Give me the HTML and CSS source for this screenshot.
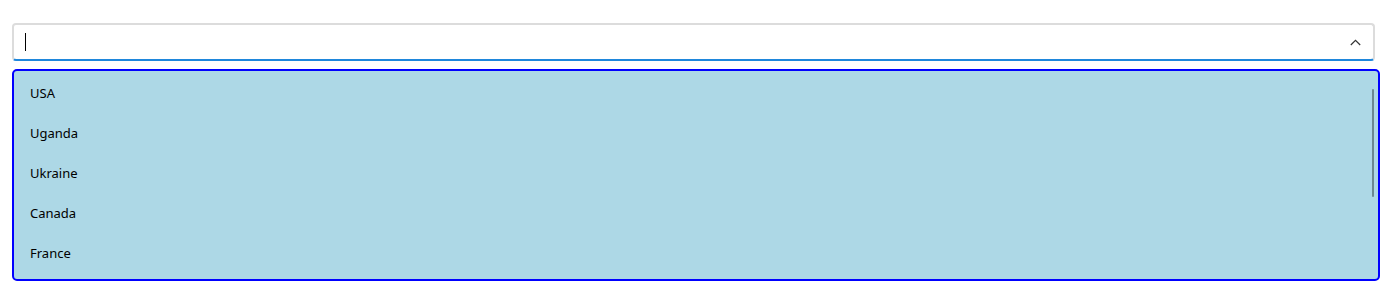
FILE: index.html
```html
<!DOCTYPE html>
<html>
<head>
<meta charset="utf-8">
<link rel="stylesheet" href="styles.css">
</head>
<body>
<div class="combo">
  <div class="input">
    <span class="caret"></span>
    <svg class="chev" width="11" height="7" viewBox="0 0 11 7"><path d="M0.8 6 L5.5 1.3 L10.2 6" fill="none" stroke="#333" stroke-width="1.2"/></svg>
  </div>
  <div class="popup">
    <ul class="list">
      <li>USA</li>
      <li>Uganda</li>
      <li>Ukraine</li>
      <li>Canada</li>
      <li>France</li>
    </ul>
    <div class="thumb"></div>
  </div>
</div>
</body>
</html>
```
FILE: styles.css
```css
html, body { margin: 0; padding: 0; background: #fff; }
body { font-family: "Segoe UI", "Noto Sans", "Open Sans", sans-serif; font-size: 13px; color: #000; }
.combo { padding: 23px 19px 0 12px; display: flex; flex-direction: column; gap: 8px; }
.input {
  box-sizing: border-box;
  height: 38px;
  width: 1363px;
  border: 2px solid #dcdcdc;
  border-bottom: 2px solid #1f87dc;
  border-radius: 4px;
  display: flex;
  align-items: center;
  justify-content: space-between;
  padding: 0 12px 0 11px;
}
.caret { width: 1px; height: 18px; background: #000; }
.popup {
  position: relative;
  width: 1368px;
  height: 212px;
  box-sizing: border-box;
  border: 2px solid #0000ff;
  border-radius: 5px;
  background: #add8e6;
  overflow: hidden;
}
.list { list-style: none; margin: 0; padding: 2px 0 0 0; }
.list li { height: 40px; line-height: 40px; padding-left: 16px; }
.thumb {
  position: absolute;
  top: 18px;
  right: 4px;
  width: 2px;
  height: 108px;
  background: #6a8990;
  border-radius: 1px;
}
```
